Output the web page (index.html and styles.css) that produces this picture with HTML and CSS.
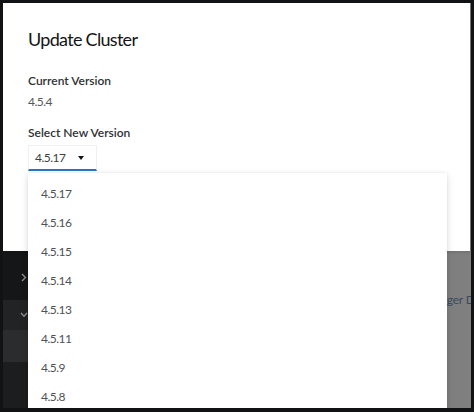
FILE: index.html
```html
<!DOCTYPE html>
<html lang="en">
<head>
<meta charset="utf-8">
<title>Update Cluster</title>
<link rel="stylesheet" href="styles.css">
</head>
<body>
<div class="screen">
  <div class="app">
    <aside class="sidebar">
      <div class="nav-fill"></div>
      <div class="nav-row row-a"><svg class="chev" width="6" height="9" viewBox="0 0 6 9"><path d="M1 1l3.5 3.5L1 8" fill="none" stroke="currentColor" stroke-width="1.4"/></svg></div>
      <div class="nav-row row-b"><svg class="chev" width="8" height="6" viewBox="0 0 8 6"><path d="M1 1l3 3.2L7 1" fill="none" stroke="currentColor" stroke-width="1.4"/></svg></div>
      <div class="nav-row row-c"></div>
      <div class="nav-row row-d"></div>
    </aside>
    <main class="page">
      <div class="page-top"></div>
      <div class="page-row"><span class="link">Manager Details</span></div>
    </main>

    <section class="modal">
      <h1 class="title">Update Cluster</h1>
      <div class="field">
        <div class="label">Current Version</div>
        <div class="value ver">4.5.4</div>
      </div>
      <div class="field">
        <div class="label">Select New Version</div>
        <button class="toggle"><span class="ver">4.5.17</span><span class="caret"></span></button>
      </div>
    </section>

    <ul class="menu">
      <li class="ver">4.5.17</li>
      <li class="ver">4.5.16</li>
      <li class="ver">4.5.15</li>
      <li class="ver">4.5.14</li>
      <li class="ver">4.5.13</li>
      <li class="ver">4.5.11</li>
      <li class="ver">4.5.9</li>
      <li class="ver">4.5.8</li>
    </ul>
  </div>
</div>
</body>
</html>
```
FILE: styles.css
```css
* { box-sizing: border-box; }
html, body { margin: 0; padding: 0; background: #121212; }
body { font-family: Lato, "Open Sans", sans-serif; }

.screen {
  width: 474px;
  height: 412px;
  padding: 3px 3px 4px 3px;
  background: #111214;
}

.app {
  position: relative;
  width: 468px;
  height: 405px;
  overflow: hidden;
  display: flex;
  background: #7f7f7f;
}

.sidebar {
  flex: 0 0 200px;
  width: 200px;
  display: flex;
  flex-direction: column;
  background: #1c1d1f;
}
.nav-fill { height: 248px; background: #151618; }
.nav-row { display: flex; align-items: center; justify-content: flex-end; padding-right: 176px; color: #8c8d8f; }
.row-a { height: 49px; background: #151618; padding-top: 4px; }
.row-b { height: 30px; background: #222325; padding-right: 175px; }
.row-c { height: 32px; background: #2b2c2e; }
.row-d { flex: 1; background: #1c1d1f; }

.page { flex: 1 1 auto; min-width: 0; display: flex; flex-direction: column; background: #7f7f7f; }
.page-top { height: 285px; }
.page-row { padding-left: 215px; white-space: nowrap; }
.link { font-size: 12px; line-height: 16px; color: #3a4a5f; letter-spacing: -0.2px; }

.modal {
  position: absolute;
  top: 0;
  left: 0;
  width: 467px;
  height: 248px;
  background: #fff;
  padding: 24px 25px 0 25px;
  box-shadow: 1px 1px 3px rgba(0,0,0,0.15);
}
.title {
  margin: 0 0 22px 0;
  font-size: 18px;
  line-height: 24px;
  font-weight: 400;
  letter-spacing: -0.7px;
  color: #151515;
}
.field { display: flex; flex-direction: column; align-items: flex-start; margin-bottom: 15px; }
.label { font-size: 12px; line-height: 16px; font-weight: 600; color: #2f3133; margin-bottom: 5px; }
.value { font-size: 12px; line-height: 16px; color: #55585b; }
.ver { letter-spacing: -0.5px; }
.field .label + .toggle { margin-top: -1px; }

.toggle {
  display: flex;
  align-items: center;
  width: 69px;
  height: 26px;
  padding: 0 0 0 6px;
  margin: 0;
  border: 1px solid #f0f0f0;
  border-bottom: 2px solid #2f74c0;
  background: #fff;
  font-family: inherit;
  font-size: 12px;
  line-height: 16px;
  color: #3c3f42;
  gap: 12px;
}
.caret {
  width: 0;
  height: 0;
  border-left: 3.5px solid transparent;
  border-right: 3.5px solid transparent;
  border-top: 4px solid #151515;
}

.menu {
  position: absolute;
  top: 170px;
  left: 25px;
  width: 419px;
  height: 260px;
  margin: 0;
  padding: 6px 0 0 0;
  list-style: none;
  background: #fff;
  box-shadow: 0 3px 8px rgba(3,3,3,0.12), 0 0 3px rgba(3,3,3,0.08);
}
.menu li {
  height: 29px;
  display: flex;
  align-items: center;
  padding-left: 13px;
  font-size: 12px;
  line-height: 16px;
  color: #4f5255;
}
```
